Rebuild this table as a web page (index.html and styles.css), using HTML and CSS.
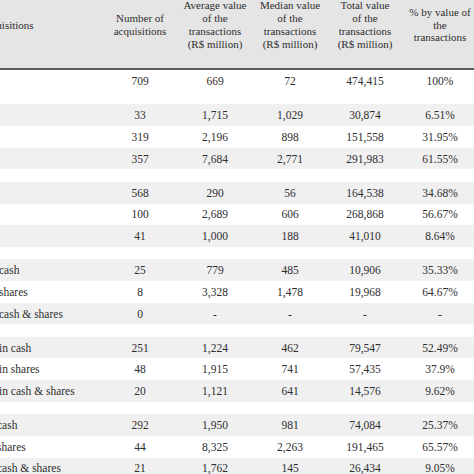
FILE: index.html
```html
<!DOCTYPE html>
<html>
<head>
<meta charset="utf-8">
<link rel="stylesheet" href="styles.css">
</head>
<body>
<table class="data">
  <colgroup>
    <col class="c-label"><col class="c-num"><col class="c-num"><col class="c-num"><col class="c-num"><col class="c-num">
  </colgroup>
  <thead>
    <tr>
      <th class="lab"><span class="cut-head">Acquisitions</span></th>
      <th>Number of<br>acquisitions</th>
      <th>Average value<br>of the<br>transactions<br>(R$ million)</th>
      <th>Median value<br>of the<br>transactions<br>(R$ million)</th>
      <th>Total value<br>of the<br>transactions<br>(R$ million)</th>
      <th>% by value of<br>the<br>transactions</th>
    </tr>
  </thead>
  <tbody>
    <tr class="first"><td class="lab"></td><td>709</td><td>669</td><td>72</td><td>474,415</td><td>100%</td></tr>
    <tr class="gap"><td colspan="6"></td></tr>
    <tr class="alt"><td class="lab"></td><td>33</td><td>1,715</td><td>1,029</td><td>30,874</td><td>6.51%</td></tr>
    <tr><td class="lab"></td><td>319</td><td>2,196</td><td>898</td><td>151,558</td><td>31.95%</td></tr>
    <tr class="alt"><td class="lab"></td><td>357</td><td>7,684</td><td>2,771</td><td>291,983</td><td>61.55%</td></tr>
    <tr class="gap"><td colspan="6"></td></tr>
    <tr class="alt"><td class="lab"></td><td>568</td><td>290</td><td>56</td><td>164,538</td><td>34.68%</td></tr>
    <tr><td class="lab"></td><td>100</td><td>2,689</td><td>606</td><td>268,868</td><td>56.67%</td></tr>
    <tr class="alt"><td class="lab"></td><td>41</td><td>1,000</td><td>188</td><td>41,010</td><td>8.64%</td></tr>
    <tr class="gap"><td colspan="6"></td></tr>
    <tr class="alt"><td class="lab g1">cash</td><td>25</td><td>779</td><td>485</td><td>10,906</td><td>35.33%</td></tr>
    <tr><td class="lab g1">shares</td><td>8</td><td>3,328</td><td>1,478</td><td>19,968</td><td>64.67%</td></tr>
    <tr class="alt"><td class="lab g1">cash &amp; shares</td><td>0</td><td>-</td><td>-</td><td>-</td><td>-</td></tr>
    <tr class="gap"><td colspan="6"></td></tr>
    <tr class="alt"><td class="lab g2">in cash</td><td>251</td><td>1,224</td><td>462</td><td>79,547</td><td>52.49%</td></tr>
    <tr><td class="lab g2">in shares</td><td>48</td><td>1,915</td><td>741</td><td>57,435</td><td>37.9%</td></tr>
    <tr class="alt"><td class="lab g2">in cash &amp; shares</td><td>20</td><td>1,121</td><td>641</td><td>14,576</td><td>9.62%</td></tr>
    <tr class="gap"><td colspan="6"></td></tr>
    <tr class="alt"><td class="lab g3">cash</td><td>292</td><td>1,950</td><td>981</td><td>74,084</td><td>25.37%</td></tr>
    <tr><td class="lab g3">shares</td><td>44</td><td>8,325</td><td>2,263</td><td>191,465</td><td>65.57%</td></tr>
    <tr class="alt"><td class="lab g3">cash &amp; shares</td><td>21</td><td>1,762</td><td>145</td><td>26,434</td><td>9.05%</td></tr>
  </tbody>
</table>
</body>
</html>
```
FILE: styles.css
```css
html, body {
  margin: 0;
  padding: 0;
  background: #ffffff;
  overflow: hidden;
}

.data {
  border-collapse: collapse;
  table-layout: fixed;
  width: 477.5px;
  margin-top: -18px;
  font-family: "Liberation Serif", "Times New Roman", serif;
  color: #2e2e2e;
}

.c-label { width: 102.5px; }
.c-num { width: 75px; }

.data th {
  background: #e5e5e5;
  height: 86px;
  padding: 0;
  font-weight: normal;
  font-size: 11px;
  line-height: 12.8px;
  text-align: center;
  vertical-align: middle;
  border-bottom: 2px solid #5e5e5e;
  white-space: nowrap;
}

.data th.lab {
  text-align: left;
  overflow: hidden;
}

.cut-head {
  display: inline-block;
  margin-left: -22px;
}

.data td {
  padding: 0;
  height: 21.7px;
  font-size: 11.5px;
  text-align: center;
  vertical-align: middle;
  white-space: nowrap;
}

.data tr.first td { height: 22px; }
.data tr.gap td { height: 12.4px; }

.data tr.alt td { background: #f0f0f0; }

.data td.lab {
  text-align: left;
  overflow: visible;
}

.g1 { text-indent: -1px; }
.g2 { text-indent: -1px; }
.g3 { text-indent: -3px; }
```
